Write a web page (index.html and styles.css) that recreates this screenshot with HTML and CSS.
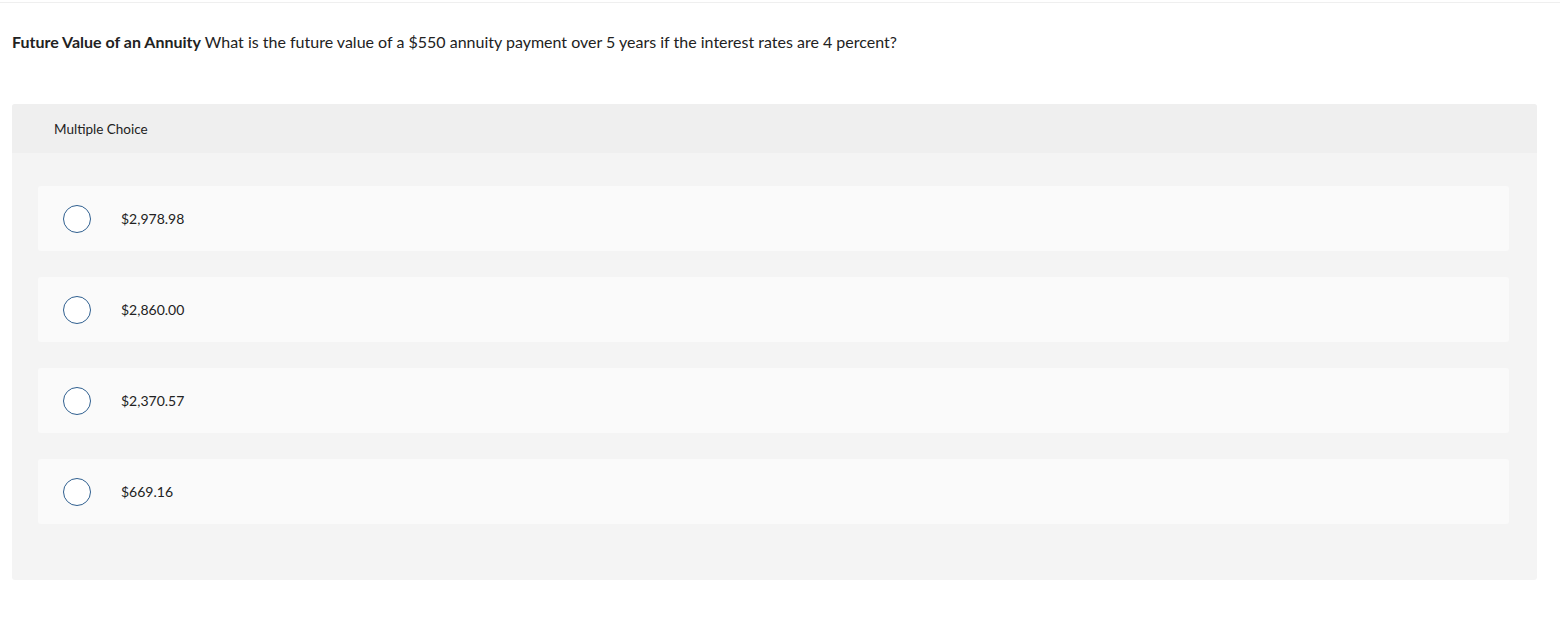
FILE: index.html
```html
<!DOCTYPE html>
<html lang="en">
<head>
    <meta charset="UTF-8"/>
    <title>Multiple Choice</title>
    <link rel="stylesheet" href="styles.css">
</head>
<body>
<div class="top-rule"></div>

<!-- 题干 -->
<p class="question">
    <strong>Future Value of an Annuity</strong> What is the future value of a $550 annuity payment over 5 years if the interest rates are 4 percent?
</p>

<!-- 选择题面板 -->
<section class="choice-panel">
    <header class="choice-head">Multiple Choice</header>
    <ul class="choice-list">
        <li class="choice-item"><span class="radio"></span><span class="label">$2,978.98</span></li>
        <li class="choice-item"><span class="radio"></span><span class="label">$2,860.00</span></li>
        <li class="choice-item"><span class="radio"></span><span class="label">$2,370.57</span></li>
        <li class="choice-item"><span class="radio"></span><span class="label">$669.16</span></li>
    </ul>
</section>
</body>
</html>
```

FILE: styles.css
```css
* {
    margin: 0;
    padding: 0;
    box-sizing: border-box;
}

body {
    font-family: Lato, "Open Sans", "Liberation Sans", sans-serif;
    color: #222222;
    background-color: #ffffff;
}

/* 顶部细线 */
.top-rule {
    margin-top: 2px;
    height: 1px;
    background-color: #efefef;
}

/* 题干 */
.question {
    padding: 30px 12px 0;
    font-size: 16px;
    line-height: 18px;
}

.question strong {
    font-weight: 700;
}

/* 面板 */
.choice-panel {
    margin: 53px 23px 0 12px;
    background-color: #f4f4f4;
    border-radius: 3px;
    overflow: hidden;
}

.choice-head {
    height: 49px;
    background-color: #efefef;
    padding-left: 42px;
    display: flex;
    align-items: center;
    font-size: 13.5px;
}

.choice-list {
    list-style: none;
    padding: 33px 28px 56px 26px;
    display: flex;
    flex-direction: column;
    gap: 26px;
}

.choice-item {
    height: 65px;
    background-color: #fafafa;
    border-radius: 3px;
    display: flex;
    align-items: center;
    padding-left: 25px;
}

.radio {
    width: 28px;
    height: 28px;
    border: 1.5px solid #2f5f8f;
    border-radius: 50%;
    background-color: #ffffff;
    flex-shrink: 0;
}

.label {
    margin-left: 30px;
    font-size: 14px;
}
```
